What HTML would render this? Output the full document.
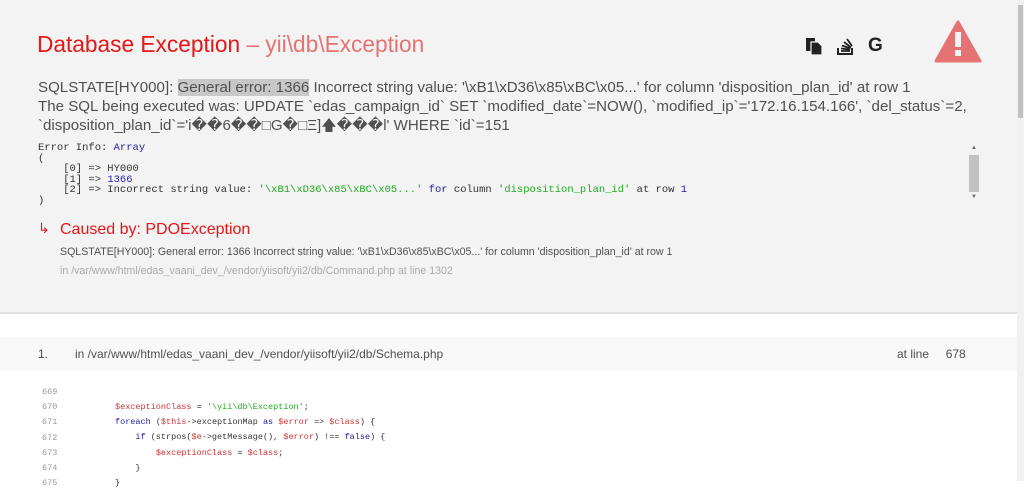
<!DOCTYPE html>
<html><head><meta charset="utf-8"><style>
body{margin:0;width:1024px;height:481px;overflow:hidden;background:#fff;font-family:"Liberation Sans",Arial,sans-serif;position:relative}
.a{position:absolute;white-space:nowrap}
.hdr{position:absolute;left:0;top:0;width:1017px;height:312px;background:#f3f3f3;border-bottom:2px solid #e0e0e0}
.mono{font-family:"Liberation Mono",monospace;font-size:10.5px;line-height:10.5px;color:#333}
.code{font-family:"Liberation Mono",monospace;font-size:8.5px;color:#333}
.ln{color:#999}
</style></head><body>
<div class="hdr"></div>
<div class="a" style="left:37px;top:31px;font-size:22.7px;color:#e51717">Database Exception <span style="color:#e57373">– yii\db\Exception</span></div>
<svg class="a" style="left:805px;top:37px" width="18" height="18" viewBox="0 0 18 18"><rect x="1" y="1" width="9" height="13" fill="#222"/><path d="M6 5h7l4 4v9H6z" fill="#222" stroke="#f3f3f3" stroke-width="1.2"/></svg>
<svg class="a" style="left:837px;top:36px" width="18" height="19" viewBox="0 0 18 19"><path d="M1 12v6h14v-6" fill="none" stroke="#222" stroke-width="2"/><path d="M4 15h9M4 12.5l9 1M5 9.5l8.5 3M7 6l7 5.5M10 3l5 7" stroke="#222" stroke-width="1.8"/></svg>
<div class="a" style="left:868px;top:35px;font-size:19px;font-weight:bold;color:#222">G</div>
<svg class="a" style="left:934px;top:20px" width="48" height="44" viewBox="0 0 48 44"><path d="M24 2L2 41h44z" fill="#e57373" stroke="#e57373" stroke-width="3" stroke-linejoin="round"/><rect x="21" y="12" width="6" height="15" fill="#f3f3f3"/><rect x="21" y="30" width="6" height="6" fill="#f3f3f3"/></svg>
<div class="a" style="left:38px;top:78px;font-size:15.1px;line-height:19px;color:#505050">SQLSTATE[HY000]: <span style="background:#c8c8c8">General error: 1366</span> Incorrect string value: '\xB1\xD36\x85\xBC\x05...' for column 'disposition_plan_id' at row 1<br>The SQL being executed was: UPDATE `edas_campaign_id` SET `modified_date`=NOW(), `modified_ip`='172.16.154.166', `del_status`=2,<br>`disposition_plan_id`='i��6��□G�□Ξ]🡅���l' WHERE `id`=151</div>
<div class="a mono" style="left:38px;top:143px">Error Info: <span style="color:#22a">Array</span><br>(<br>&nbsp;&nbsp;&nbsp;&nbsp;[0] =&gt; HY000<br>&nbsp;&nbsp;&nbsp;&nbsp;[1] =&gt; <span style="color:#22a">1366</span><br>&nbsp;&nbsp;&nbsp;&nbsp;[2] =&gt; Incorrect string value: <span style="color:#2a2">'\xB1\xD36\x85\xBC\x05...'</span> <span style="color:#22a">for</span> column <span style="color:#2a2">'disposition_plan_id'</span> at row <span style="color:#22a">1</span><br>)</div>
<div class="a" style="left:969px;top:155px;width:10px;height:37px;background:#c1c1c1"></div>
<div class="a" style="left:971px;top:145px;font-size:6px;color:#666">▲</div>
<div class="a" style="left:971px;top:194px;font-size:6px;color:#666">▼</div>
<div class="a" style="left:38px;top:220px;font-size:14px;color:#e51717">↳</div>
<div class="a" style="left:60px;top:221px;font-size:16px;color:#e51717">Caused by: PDOException</div>
<div class="a" style="left:60px;top:246px;font-size:10.6px;color:#505050">SQLSTATE[HY000]: General error: 1366 Incorrect string value: '\xB1\xD36\x85\xBC\x05...' for column 'disposition_plan_id' at row 1</div>
<div class="a" style="left:60px;top:265px;font-size:10.6px;color:#aaa">in /var/www/html/edas_vaani_dev_/vendor/yiisoft/yii2/db/Command.php at line 1302</div>
<div class="a" style="left:0;top:337px;width:1017px;height:34px;background:#f8f8f8"></div>
<div class="a" style="left:38px;top:347px;font-size:12px;color:#505050">1.</div>
<div class="a" style="left:75px;top:347px;font-size:12px;color:#505050">in /var/www/html/edas_vaani_dev_/vendor/yiisoft/yii2/db/Schema.php</div>
<div class="a" style="left:897px;top:347px;font-size:12px;color:#505050">at line&nbsp;&nbsp;&nbsp;&nbsp;&nbsp;678</div>
<div class="a code" style="left:42px;top:385px;line-height:15.2px"><span class="ln">669<br>670<br>671<br>672<br>673<br>674<br>675</span></div>
<div class="a code" style="left:115px;top:400px;line-height:15.2px"><span style="color:#c33">$exceptionClass</span> = <span style="color:#2a2">'\yii\db\Exception'</span>;<br><span style="color:#22a">foreach</span> (<span style="color:#c33">$this</span>-&gt;exceptionMap <span style="color:#22a">as</span> <span style="color:#c33">$error</span> =&gt; <span style="color:#c33">$class</span>) {<br>&nbsp;&nbsp;&nbsp;&nbsp;<span style="color:#22a">if</span> (strpos(<span style="color:#c33">$e</span>-&gt;getMessage(), <span style="color:#c33">$error</span>) !== <span style="color:#22a">false</span>) {<br>&nbsp;&nbsp;&nbsp;&nbsp;&nbsp;&nbsp;&nbsp;&nbsp;<span style="color:#c33">$exceptionClass</span> = <span style="color:#c33">$class</span>;<br>&nbsp;&nbsp;&nbsp;&nbsp;}<br>}</div>
<div class="a" style="left:1017px;top:0;width:7px;height:481px;background:#f1f1f1"></div>
<div class="a" style="left:1018px;top:5px;width:5px;height:113px;background:#c1c1c1"></div>
</body></html>
